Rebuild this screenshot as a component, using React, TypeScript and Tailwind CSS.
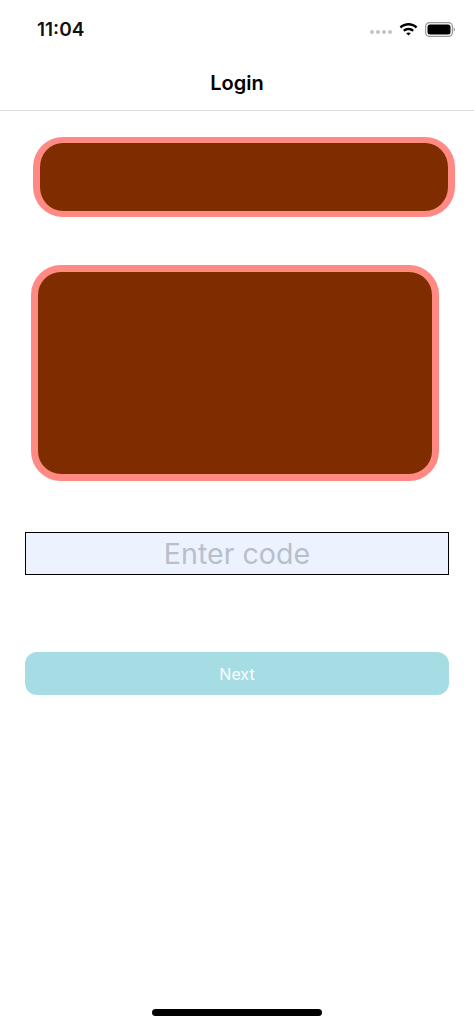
export default function App() {
  return (
    <div className="flex flex-col h-[1026px] w-full bg-white font-['Inter','Liberation_Sans',sans-serif] overflow-hidden">
      {/* Status bar */}
      <div className="flex items-center justify-between h-[58px] pl-[37px] pr-[19px] shrink-0">
        <span className="text-[19px] font-semibold text-[#111] leading-none">11:04</span>
        <div className="flex items-center">
          <div className="flex gap-[2px] mr-[7px] mt-[5px]">
            <span className="w-[4px] h-[4px] rounded-full bg-[#c4c4c4]" />
            <span className="w-[4px] h-[4px] rounded-full bg-[#c4c4c4]" />
            <span className="w-[4px] h-[4px] rounded-full bg-[#c4c4c4]" />
            <span className="w-[4px] h-[4px] rounded-full bg-[#c4c4c4]" />
          </div>
          <svg width="19" height="14" viewBox="0 0 19 14" className="mr-[7px]">
            <path d="M0.6 4.6C5.5 -0.2 13.5 -0.2 18.4 4.6L16.7 6.4C12.8 2.6 6.2 2.6 2.3 6.4Z" fill="#000" />
            <path d="M4 8C7 5.1 12 5.1 15 8L13.3 9.7C11.2 7.7 7.8 7.7 5.7 9.7Z" fill="#000" />
            <path d="M7.2 11.2C8.2 10.2 10.8 10.2 11.8 11.2L9.5 13.6Z" fill="#000" />
          </svg>
          <svg width="30" height="15" viewBox="0 0 30 15">
            <rect x="0.6" y="0.6" width="26.8" height="13.8" rx="4" fill="none" stroke="#9a9a9a" strokeWidth="1.2" />
            <rect x="2.5" y="2.5" width="23" height="10" rx="2.5" fill="#000" />
            <path d="M28.6 5.2C29.5 5.6 29.9 6.4 29.9 7.5C29.9 8.6 29.5 9.4 28.6 9.8Z" fill="#9a9a9a" />
          </svg>
        </div>
      </div>

      {/* Nav bar */}
      <div className="flex items-center justify-center h-[53px] border-b border-[#dcdcdc] shrink-0">
        <h1 className="text-[20px] font-semibold text-black leading-none mb-[3px]">Login</h1>
      </div>

      {/* Image placeholders */}
      <div className="ml-[33px] mt-[26px] w-[422px] h-[80px] shrink-0 rounded-[30px] border-x-[7px] border-y-[6px] border-[#ff8a84] bg-[#7e2c00]" />
      <div className="ml-[31px] mt-[48px] w-[408px] h-[216px] shrink-0 rounded-[30px] border-[7px] border-[#ff8a84] bg-[#7e2c00]" />

      {/* Code input */}
      <input
        type="text"
        placeholder="Enter code"
        readOnly
        className="ml-[25px] mt-[51px] w-[424px] h-[43px] shrink-0 border-[1.5px] border-black bg-[#ecf3fe] text-center text-[28.6px] outline-none placeholder:text-[#b8bfcc]"
      />

      {/* Next button */}
      <button className="ml-[25px] mt-[77px] w-[424px] h-[43px] shrink-0 rounded-[12px] bg-[#a6dce4] text-[16px] text-white">
        Next
      </button>

      {/* Home indicator */}
      <div className="mt-auto mb-[10px] mx-auto w-[170px] h-[7px] rounded-full bg-black shrink-0" />
    </div>
  );
}
